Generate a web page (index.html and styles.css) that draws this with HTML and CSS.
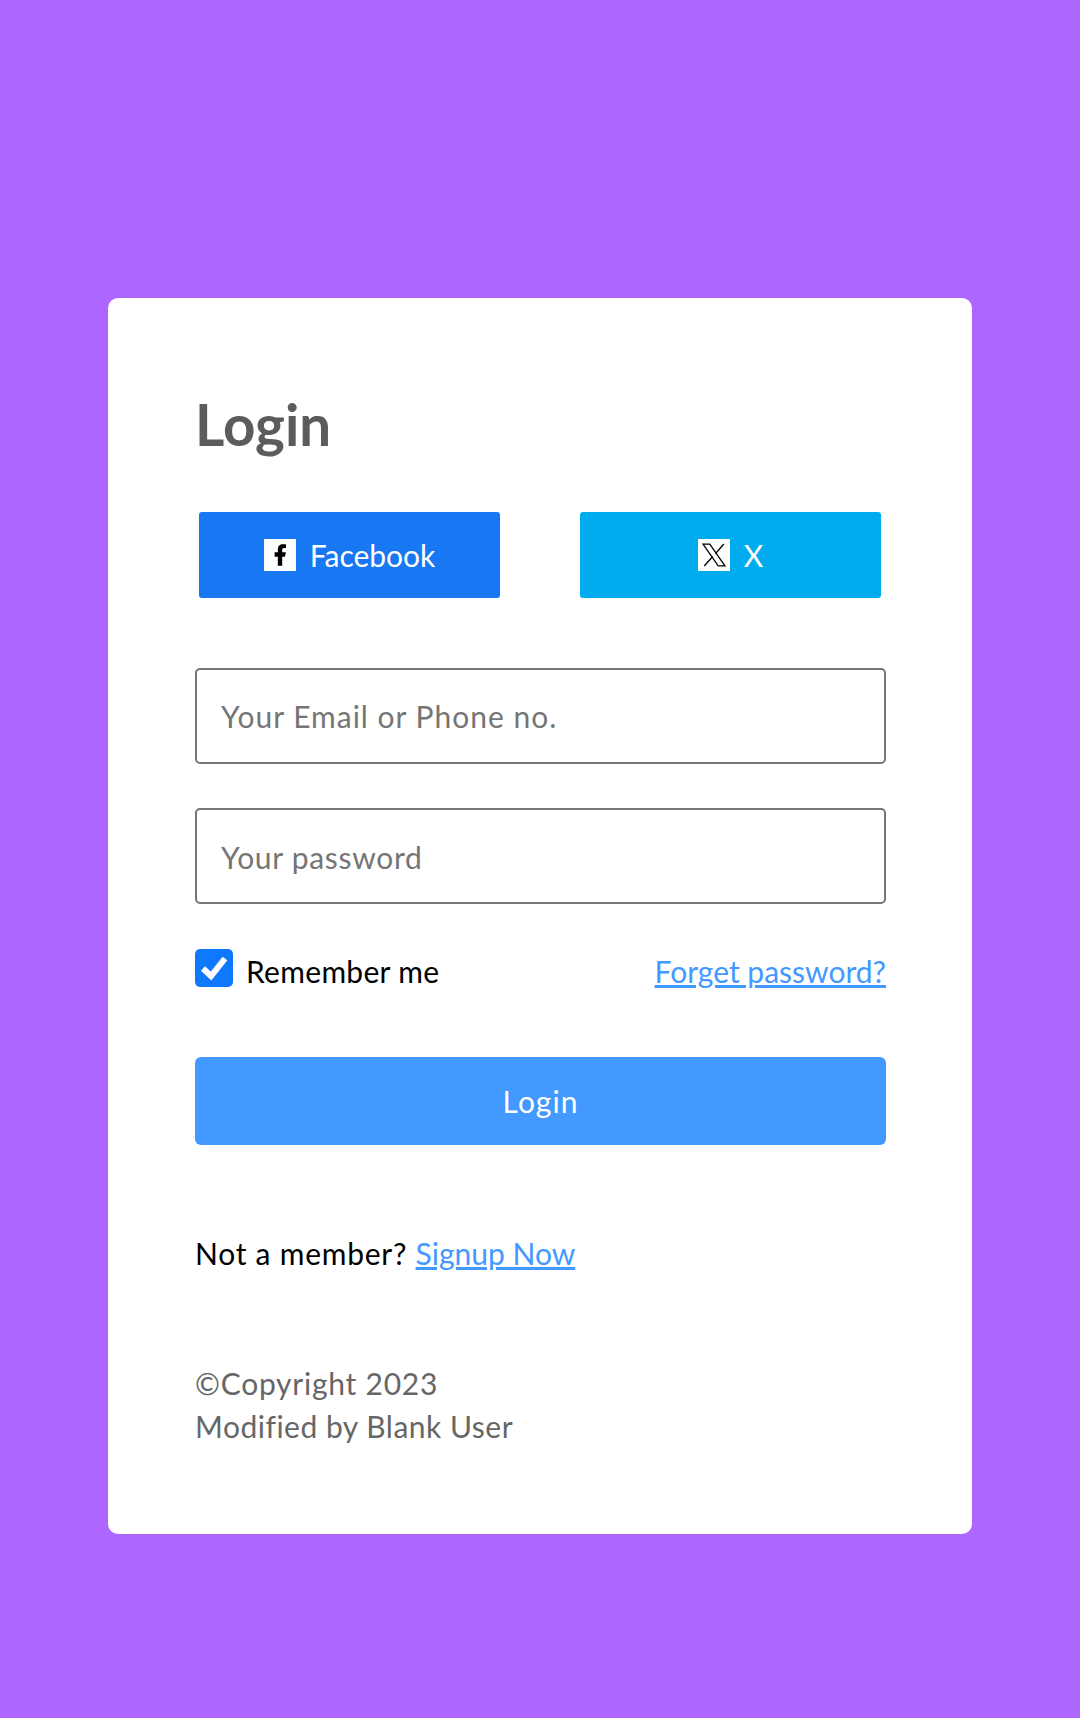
FILE: index.html
```html
<!DOCTYPE html>
<html lang="en">
<head>
<meta charset="utf-8">
<title>Login</title>
<link rel="stylesheet" href="styles.css">
</head>
<body>
<main class="card">
  <h1 class="title">Login</h1>
  <div class="socials">
    <a class="social facebook" href="#">
      <span class="social-icon"><svg viewBox="0 0 24 24" width="26" height="26"><path d="M14 13.5h2.5l1-4H14v-2c0-1.03 0-2 2-2h1.5V2.14c-.326-.043-1.557-.14-2.857-.14C11.928 2 10 3.657 10 6.7v2.8H7v4h3V22h4v-8.5z"/></svg></span>
      <span>Facebook</span>
    </a>
    <a class="social x" href="#">
      <span class="social-icon"><svg viewBox="0 0 24 24" width="28" height="28" fill="none" stroke="#000" stroke-width="1.1"><path d="M2.6 2.6h5.8L21.4 21.4h-5.8z"/><path d="M20.4 2.6l-7.2 8.3M10.9 13.3l-7.3 8.1"/></svg></span>
      <span>X</span>
    </a>
  </div>
  <form class="form">
    <input class="field" type="text" placeholder="Your Email or Phone no.">
    <input class="field field-password" type="password" placeholder="Your password">
    <div class="options">
      <label class="remember">
        <svg class="check" viewBox="0 0 38 38" width="38" height="38"><rect width="38" height="38" rx="5" fill="#0e78ff"/><path d="M8 19.5l8 7.5L30 9.5" fill="none" stroke="#fff" stroke-width="6"/></svg>
        <span>Remember me</span>
      </label>
      <a class="link" href="#">Forget password?</a>
    </div>
    <button class="submit" type="button">Login</button>
  </form>
  <p class="signup">Not a member? <a class="link" href="#">Signup Now</a></p>
  <footer class="footer">
    <div class="copyright">©Copyright 2023</div>
    <div>Modified by Blank User</div>
  </footer>
</main>
</body>
</html>
```

FILE: styles.css
```css
* { box-sizing: border-box; }
html, body { margin: 0; height: 100%; }
body {
  background: #ad66ff;
  font-family: "Lato", "Noto Sans", sans-serif;
  font-size: 30px;
  letter-spacing: 0.5px;
  padding: 298px 108px 184px;
}
.card {
  background: #fff;
  border-radius: 10px;
  height: 1236px;
  padding: 89px 86px 0 87px;
}
.title {
  margin: 0 0 50px;
  height: 75px;
  line-height: 75px;
  font-size: 56.5px;
  font-weight: 700;
  letter-spacing: 0;
  color: #5c5c5c;
}
.socials {
  display: flex;
  justify-content: space-between;
  padding: 0 5px 0 4px;
}
.social {
  width: 301px;
  height: 86px;
  display: flex;
  align-items: center;
  justify-content: center;
  gap: 14px;
  border-radius: 3px;
  color: #fff;
  text-decoration: none;
  letter-spacing: 0;
}
.facebook { background: #1877f2; }
.x { background: #00acee; }
.social-icon {
  width: 32px;
  height: 32px;
  background: #fff;
  display: flex;
  align-items: center;
  justify-content: center;
}
.form {
  margin-top: 70px;
  display: flex;
  flex-direction: column;
}
.field {
  height: 96px;
  margin-bottom: 44px;
  padding: 0 25px 0 24px;
  border: 2px solid #767676;
  border-radius: 5px;
  font: inherit;
  letter-spacing: 1px;
  color: #333;
  background: #fff;
}
.field-password {
  letter-spacing: 0.7px;
  padding-top: 2px;
}
.field::placeholder { color: #757575; opacity: 1; }
.options {
  display: flex;
  justify-content: space-between;
  align-items: flex-start;
  margin-top: 1px;
  height: 38px;
  color: #000;
}
.remember {
  display: flex;
  align-items: flex-start;
  gap: 13px;
  letter-spacing: 0.3px;
}
.remember span, .options .link {
  line-height: 44px;
}
.link { color: #4399ff; letter-spacing: 0; }
.submit {
  margin-top: 70px;
  height: 88px;
  border: 0;
  border-radius: 6px;
  background: #4399ff;
  color: #fff;
  font: inherit;
  letter-spacing: 1px;
}
.signup {
  margin: 87px 0 0;
  line-height: 43px;
  color: #000;
  letter-spacing: 0.75px;
}
.footer {
  margin-top: 87px;
  line-height: 43px;
  color: #666;
}
.copyright { letter-spacing: 0.75px; }
```
